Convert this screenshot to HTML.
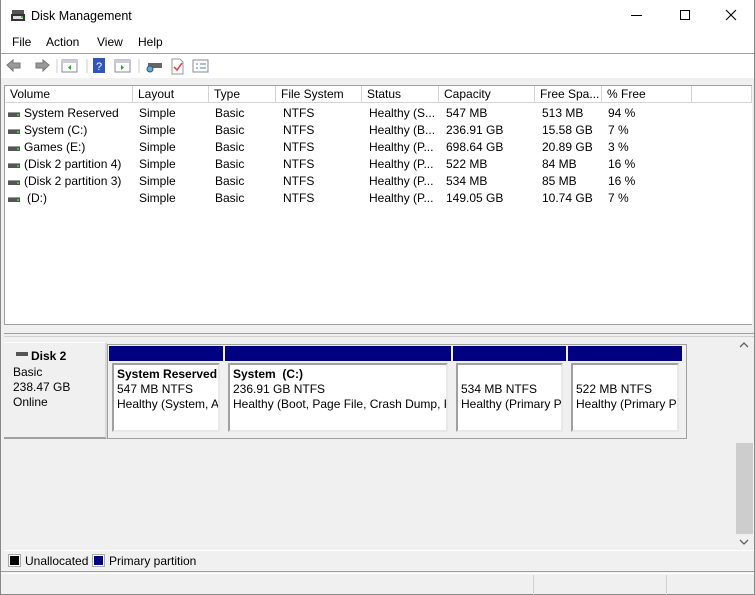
<!DOCTYPE html>
<html><head><style>
*{margin:0;padding:0;box-sizing:border-box}
body{width:755px;height:595px;overflow:hidden;background:#f0f0f0;font-family:"Liberation Sans",sans-serif;font-size:12px;color:#000;position:relative}
.a{position:absolute;white-space:nowrap}
.hd{position:absolute;top:86px;height:17px;border-right:1px solid #d5d5d5;border-bottom:1px solid #d5d5d5;padding-left:5px;line-height:17px;background:#fff}
.row{position:absolute;left:5px;width:745px;height:17px;line-height:17px}
.row span{position:absolute}
.di{display:inline-block;width:12px;height:5px;background:#555;border-top:1px solid #999;position:absolute;left:3px;top:7px}
.di:after{content:"";position:absolute;right:1px;top:1px;width:2px;height:2px;background:#3c3}
.part{position:absolute;top:346px;height:87px;background:#f0f0f0}
.part .bar{height:15px;background:#000080}
.part .in{position:absolute;left:3px;right:3px;top:17px;bottom:1px;background:#fff;border:2px solid #a0a0a0;border-right-color:#e8e8e8;border-bottom-color:#e8e8e8;padding:2px 3px;line-height:15px;overflow:hidden;white-space:nowrap}
</style></head><body>
<div class="a" style="left:0;top:0;width:755px;height:595px;border:1px solid #888;border-top:none"></div>
<div class="a" style="left:1px;top:0;width:753px;height:53px;background:#fff"></div>
<svg class="a" style="left:10px;top:9px" width="16" height="14"><rect x="2" y="1" width="12" height="4" fill="#555"/><rect x="1" y="5" width="14" height="7" fill="#333"/><rect x="3" y="7" width="10" height="3" fill="#ddd"/><rect x="11" y="7" width="2" height="2" fill="#3c3"/></svg>
<div class="a" style="left:31px;top:9px;font-size:12.5px">Disk Management</div>
<div class="a" style="left:631px;top:15px;width:11px;height:1px;background:#000"></div>
<div class="a" style="left:680px;top:10px;width:10px;height:10px;border:1px solid #000"></div>
<svg class="a" style="left:725px;top:9px" width="12" height="12"><path d="M1 1L11 11M11 1L1 11" stroke="#000" stroke-width="1.1"/></svg>
<div class="a" style="left:12px;top:35px">File</div>
<div class="a" style="left:46px;top:35px">Action</div>
<div class="a" style="left:97px;top:35px">View</div>
<div class="a" style="left:138px;top:35px">Help</div>
<div class="a" style="left:1px;top:53px;width:753px;height:1px;background:#a0a0a0"></div>
<div class="a" style="left:1px;top:54px;width:753px;height:24px;background:#fff"></div>
<svg class="a" style="left:5px;top:57px" width="220" height="18">
<path d="M2 8l6-5v3h7v5H8v3z" fill="#999" stroke="#777"/><path d="M44 8l-6-5v3h-7v5h7v3z" fill="#999" stroke="#777"/>
<line x1="52" y1="2" x2="52" y2="16" stroke="#ccc"/>
<rect x="57" y="3" width="15" height="12" fill="#fff" stroke="#889"/><rect x="57" y="3" width="15" height="3" fill="#ccd"/><path d="M66 8v5l-3-2.5z" fill="#2a2"/>
<line x1="82" y1="2" x2="82" y2="16" stroke="#ccc"/>
<rect x="88" y="1" width="12" height="15" fill="#3355bb"/><text x="91" y="13" fill="#fff" font-size="11" font-family="Liberation Sans">?</text>
<rect x="110" y="3" width="15" height="12" fill="#fff" stroke="#889"/><rect x="110" y="3" width="15" height="3" fill="#ccd"/><path d="M116 8v5l3-2.5z" fill="#2a2"/>
<line x1="134" y1="2" x2="134" y2="16" stroke="#ccc"/>
<rect x="143" y="6" width="14" height="5" fill="#666"/><circle cx="145" cy="12" r="3" fill="#6ad" stroke="#357"/>
<path d="M167 2h8l3 3v12h-11z" fill="#fff" stroke="#999"/><path d="M169 10l3 3 5-7" stroke="#e33" fill="none" stroke-width="1.5"/>
<rect x="188" y="3" width="15" height="12" fill="#fff" stroke="#889"/><path d="M191 7h2M195 7h6M191 11h2M195 11h6" stroke="#57a"/>
</svg>
<div class="a" style="left:1px;top:78px;width:753px;height:7px;background:#f0f0f0"></div>
<div class="a" style="left:4px;top:85px;width:748px;height:240px;background:#fff;border:1px solid #a0a0a0;border-right:none"></div>
<div class="hd" style="left:5px;width:128px">Volume</div>
<div class="hd" style="left:133px;width:76px">Layout</div>
<div class="hd" style="left:209px;width:67px">Type</div>
<div class="hd" style="left:276px;width:86px">File System</div>
<div class="hd" style="left:362px;width:77px">Status</div>
<div class="hd" style="left:439px;width:96px">Capacity</div>
<div class="hd" style="left:535px;width:67px">Free Spa...</div>
<div class="hd" style="left:602px;width:90px">% Free</div>
<div class="hd" style="left:692px;width:60px"></div>
<div class="row" style="top:105px"><i class="di"></i><span style="left:19px">System Reserved</span><span style="left:134px">Simple</span><span style="left:210px">Basic</span><span style="left:278px">NTFS</span><span style="left:364px">Healthy (S...</span><span style="left:441px">547 MB</span><span style="left:537px">513 MB</span><span style="left:603px">94 %</span></div>
<div class="row" style="top:122px"><i class="di"></i><span style="left:19px">System (C:)</span><span style="left:134px">Simple</span><span style="left:210px">Basic</span><span style="left:278px">NTFS</span><span style="left:364px">Healthy (B...</span><span style="left:441px">236.91 GB</span><span style="left:537px">15.58 GB</span><span style="left:603px">7 %</span></div>
<div class="row" style="top:139px"><i class="di"></i><span style="left:19px">Games (E:)</span><span style="left:134px">Simple</span><span style="left:210px">Basic</span><span style="left:278px">NTFS</span><span style="left:364px">Healthy (P...</span><span style="left:441px">698.64 GB</span><span style="left:537px">20.89 GB</span><span style="left:603px">3 %</span></div>
<div class="row" style="top:156px"><i class="di"></i><span style="left:19px">(Disk 2 partition 4)</span><span style="left:134px">Simple</span><span style="left:210px">Basic</span><span style="left:278px">NTFS</span><span style="left:364px">Healthy (P...</span><span style="left:441px">522 MB</span><span style="left:537px">84 MB</span><span style="left:603px">16 %</span></div>
<div class="row" style="top:173px"><i class="di"></i><span style="left:19px">(Disk 2 partition 3)</span><span style="left:134px">Simple</span><span style="left:210px">Basic</span><span style="left:278px">NTFS</span><span style="left:364px">Healthy (P...</span><span style="left:441px">534 MB</span><span style="left:537px">85 MB</span><span style="left:603px">16 %</span></div>
<div class="row" style="top:190px"><i class="di"></i><span style="left:22px">(D:)</span><span style="left:134px">Simple</span><span style="left:210px">Basic</span><span style="left:278px">NTFS</span><span style="left:364px">Healthy (P...</span><span style="left:441px">149.05 GB</span><span style="left:537px">10.74 GB</span><span style="left:603px">7 %</span></div>
<div class="a" style="left:4px;top:325px;width:750px;height:9px;background:#f0f0f0;border-bottom:1px solid #a0a0a0"></div>
<div class="a" style="left:4px;top:336px;width:750px;height:1px;background:#d0d0d0"></div>
<div class="a" style="left:4px;top:338px;width:731px;height:212px;background:#f0f0f0"></div>
<div class="a" style="left:4px;top:342px;width:103px;height:97px;background:#f0f0f0;border-right:2px solid #d8d8d8;border-bottom:2px solid #a0a0a0;border-top:1px solid #fff"></div>
<div class="a" style="left:16px;top:352px;width:12px;height:4px;background:#555"></div>
<div class="a" style="left:31px;top:349px;font-weight:bold">Disk 2</div>
<div class="a" style="left:13px;top:365px;line-height:15px">Basic<br>238.47 GB<br>Online</div>
<div class="a" style="left:107px;top:344px;width:580px;height:95px;border:1px solid #a0a0a0;background:#f0f0f0"></div>
<div class="part" style="left:109px;width:114px"><div class="bar"></div><div class="in"><b>System Reserved</b><br>547 MB NTFS<br>Healthy (System, A</div></div>
<div class="part" style="left:225px;width:226px"><div class="bar"></div><div class="in"><b>System&nbsp; (C:)</b><br>236.91 GB NTFS<br>Healthy (Boot, Page File, Crash Dump, P</div></div>
<div class="part" style="left:453px;width:113px"><div class="bar"></div><div class="in"><br>534 MB NTFS<br>Healthy (Primary P</div></div>
<div class="part" style="left:568px;width:114px"><div class="bar"></div><div class="in"><br>522 MB NTFS<br>Healthy (Primary P</div></div>
<div class="a" style="left:735px;top:338px;width:19px;height:212px;background:#f0f0f0"></div>
<div class="a" style="left:736px;top:443px;width:17px;height:91px;background:#cdcdcd"></div>
<svg class="a" style="left:739px;top:341px" width="10" height="8"><path d="M1 6l4-4 4 4" stroke="#606060" fill="none" stroke-width="1.3"/></svg>
<svg class="a" style="left:739px;top:538px" width="10" height="8"><path d="M1 2l4 4 4-4" stroke="#606060" fill="none" stroke-width="1.3"/></svg>
<div class="a" style="left:4px;top:550px;width:750px;height:1px;background:#fff"></div>
<div class="a" style="left:9px;top:555px;width:11px;height:11px;background:#000;border:1px solid #fff;outline:1px solid #aaa"></div>
<div class="a" style="left:25px;top:554px">Unallocated</div>
<div class="a" style="left:93px;top:555px;width:11px;height:11px;background:#000080;border:1px solid #fff;outline:1px solid #aaa"></div>
<div class="a" style="left:109px;top:554px">Primary partition</div>
<div class="a" style="left:1px;top:571px;width:753px;height:1px;background:#a0a0a0"></div>
<div class="a" style="left:1px;top:573px;width:753px;height:1px;background:#fff"></div>
<div class="a" style="left:533px;top:575px;width:1px;height:20px;background:#d0d0d0"></div>
<div class="a" style="left:666px;top:575px;width:1px;height:20px;background:#d0d0d0"></div>
</body></html>
